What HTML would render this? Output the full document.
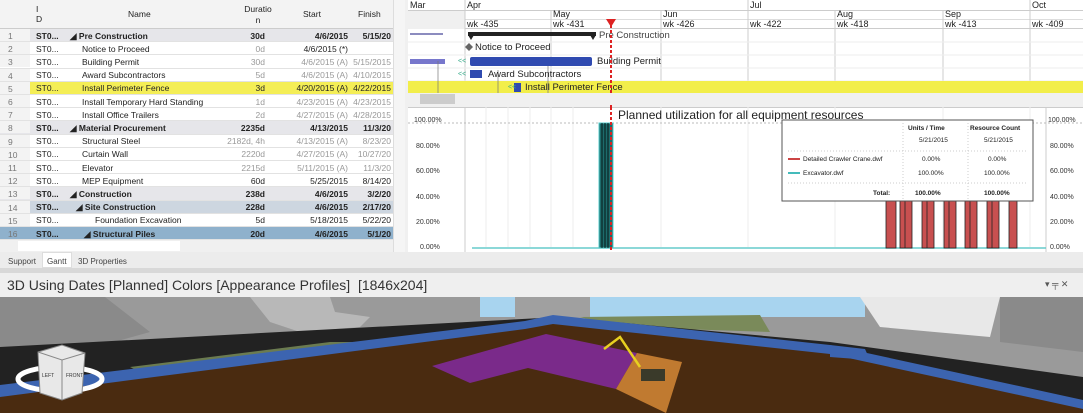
<!DOCTYPE html>
<html><head><meta charset="utf-8"><style>
*{box-sizing:border-box;margin:0;padding:0}
body{width:1083px;height:413px;overflow:hidden;background:#f0f0f0;font-family:"Liberation Sans",sans-serif;position:relative}
.a{position:absolute;white-space:nowrap}
.t{font-size:8.5px;color:#222}
.r{position:absolute;left:0;width:393px;height:13.2px;border-bottom:1px solid #e2e2e2;background:#fff}
.r span{position:absolute;top:1.5px;font-size:8.5px;color:#222;white-space:nowrap}
.g{color:#999!important}
.b{font-weight:bold}
</style></head><body>
<!-- table -->
<div class="a" style="left:0;top:0;width:405px;height:252px;background:#fff;border-right:2px solid #999"></div>
<div class="a" style="left:0;top:0;width:393px;height:29px;background:#f3f3f3;border-bottom:1px solid #ccc"></div>
<div class="a t" style="left:36px;top:4px;line-height:10px">I<br>D</div>
<div class="a t" style="left:128px;top:9px">Name</div>
<div class="a t" style="left:238px;top:4px;line-height:11px;text-align:center;width:40px">Duratio<br>n</div>
<div class="a t" style="left:303px;top:9px">Start</div>
<div class="a t" style="left:358px;top:9px">Finish</div>
<div class="a" style="left:393px;top:0;width:12px;height:252px;background:#f5f5f5;border-left:1px solid #ddd"></div>
<div id="rows"></div>
<div class="a" style="left:0;top:240px;width:393px;height:12px;background:#f0f0f0"></div>
<div class="a" style="left:18px;top:241px;width:162px;height:10px;background:#fff"></div>
<!-- tabs -->
<div class="a" style="left:0;top:252px;width:1083px;height:16px;background:#ececec"></div>
<div class="a" style="left:42px;top:252px;width:30px;height:16px;background:#fff;border:1px solid #ddd"></div>
<div class="a t" style="left:8px;top:257px;color:#444;font-size:8px">Support</div>
<div class="a t" style="left:47px;top:257px;color:#444;font-size:8px">Gantt</div>
<div class="a t" style="left:78px;top:257px;color:#444;font-size:8px">3D Properties</div>
<div class="a" style="left:0;top:268px;width:1083px;height:5px;background:#d8d8d8"></div>
<div class="a" style="left:0;top:273px;width:1083px;height:24px;background:#efefef"></div>
<div class="a" style="left:7px;top:277px;font-size:14px;color:#333">3D Using Dates [Planned] Colors [Appearance Profiles]&nbsp; [1846x204]</div>
<div class="a" style="left:1045px;top:279px;font-size:9px;color:#555">▾ ╤ ✕</div>
<!-- gantt -->
<div class="a" style="left:408px;top:0;width:675px;height:93px;background:#fff"></div>
<div class="a" style="left:408px;top:0;width:675px;height:29px;background:#fff;border-bottom:1px solid #ccc"></div>
<div class="a" style="left:408px;top:10px;width:57px;height:19px;background:#f0f0f0;border-top:1px solid #ccc"></div>
<div class="a" style="left:465px;top:10px;width:618px;border-top:1px solid #ccc"></div>
<div class="a" style="left:465px;top:19px;width:618px;border-top:1px solid #ddd"></div>
<svg class="a" style="left:408px;top:0" width="675" height="110">
<g stroke="#ccc" stroke-width="1">
<line x1="57" y1="0" x2="57" y2="93"/><line x1="143" y1="10" x2="143" y2="93"/><line x1="253" y1="10" x2="253" y2="93"/><line x1="340" y1="0" x2="340" y2="93"/><line x1="427" y1="10" x2="427" y2="93"/><line x1="535" y1="10" x2="535" y2="93"/><line x1="622" y1="0" x2="622" y2="93"/>
</g>
<g stroke="#eee"><line x1="0" y1="42" x2="675" y2="42"/><line x1="0" y1="55" x2="675" y2="55"/><line x1="0" y1="68" x2="675" y2="68"/><line x1="0" y1="81" x2="675" y2="81"/></g>
<rect x="0" y="81" width="675" height="12" fill="#f2ee4a"/>
<g font-size="9" fill="#222" font-family="Liberation Sans">
<text x="2" y="8">Mar</text><text x="59" y="8">Apr</text><text x="342" y="8">Jul</text><text x="624" y="8">Oct</text>
<text x="145" y="17">May</text><text x="255" y="17">Jun</text><text x="429" y="17">Aug</text><text x="537" y="17">Sep</text>
<text x="59" y="27">wk -435</text><text x="145" y="27">wk -431</text><text x="255" y="27">wk -426</text><text x="342" y="27">wk -422</text><text x="429" y="27">wk -418</text><text x="537" y="27">wk -413</text><text x="624" y="27">wk -409</text>
</g>
<line x1="2" y1="34" x2="35" y2="34" stroke="#66a" stroke-width="1.5"/>
<rect x="60" y="32" width="128" height="4" fill="#222"/><polygon points="60,35 66,35 63,40" fill="#222"/><polygon points="182,35 188,35 185,40" fill="#222"/>
<polygon points="61,43 65,47 61,51 57,47" fill="#666"/>
<rect x="2" y="59" width="35" height="5" fill="#77c"/>
<rect x="62" y="57" width="122" height="9" rx="2" fill="#2f4ab0"/>
<rect x="62" y="70" width="12" height="8" fill="#2f4ab0"/>
<rect x="106" y="83" width="7" height="9" fill="#2f4ab0"/>
<g stroke="#777" stroke-width="0.7" fill="none"><polyline points="30,61 30,93"/><polyline points="90,70 90,93"/><polyline points="140,66 140,93"/></g>
<g font-size="9.5" fill="#222" font-family="Liberation Sans">
<text x="191" y="38" fill="#444">Pre Construction</text><text x="67" y="50">Notice to Proceed</text><text x="189" y="64">Building Permit</text><text x="80" y="77">Award Subcontractors</text><text x="117" y="90">Install Perimeter Fence</text>
</g>
<g font-size="7" fill="#3a8"><text x="50" y="63">&lt;&lt;</text><text x="50" y="76">&lt;&lt;</text><text x="100" y="89">&lt;&lt;</text></g>
<line x1="203" y1="20" x2="203" y2="110" stroke="#d22" stroke-width="2" stroke-dasharray="3,2"/>
<polygon points="198,19 208,19 203,27" fill="#d22"/>
<rect x="0" y="93" width="675" height="12" fill="#f0f0f0"/><rect x="12" y="94" width="35" height="10" fill="#ccc"/>
</svg>
<!-- chart -->
<div class="a" style="left:408px;top:107px;width:675px;height:145px;background:#fff;border-top:1px solid #ccc"></div>
<svg class="a" style="left:408px;top:107px" width="675" height="145">
<line x1="57" y1="0" x2="57" y2="145" stroke="#ccc"/><line x1="638" y1="0" x2="638" y2="145" stroke="#ccc"/>
<g stroke="#eee"><line x1="78" y1="0" x2="78" y2="140"/><line x1="100" y1="0" x2="100" y2="140"/><line x1="122" y1="0" x2="122" y2="140"/><line x1="143" y1="0" x2="143" y2="140"/><line x1="165" y1="0" x2="165" y2="140"/><line x1="253" y1="0" x2="253" y2="140"/><line x1="340" y1="0" x2="340" y2="140"/><line x1="427" y1="0" x2="427" y2="140"/><line x1="535" y1="0" x2="535" y2="140"/><line x1="622" y1="0" x2="622" y2="140"/></g>
<line x1="0" y1="16" x2="675" y2="16" stroke="#bbb" stroke-dasharray="2,2"/>
<g font-size="7" fill="#333" font-family="Liberation Sans">
<text x="6" y="15">100.00%</text><text x="8" y="41">80.00%</text><text x="8" y="66">60.00%</text><text x="8" y="92">40.00%</text><text x="8" y="117">20.00%</text><text x="12" y="142">0.00%</text>
<text x="640" y="15">100.00%</text><text x="642" y="41">80.00%</text><text x="642" y="66">60.00%</text><text x="642" y="92">40.00%</text><text x="642" y="117">20.00%</text><text x="642" y="142">0.00%</text>
</g>
<line x1="64" y1="141" x2="638" y2="141" stroke="#6cc" stroke-width="1.5"/>
<rect x="191" y="16" width="14" height="125" fill="#1d6b6b" stroke="#5cc"/>
<g stroke="#000" stroke-width="0.8"><line x1="194" y1="16" x2="194" y2="141"/><line x1="197" y1="16" x2="197" y2="141"/><line x1="200" y1="16" x2="200" y2="141"/></g>
<line x1="203" y1="0" x2="203" y2="145" stroke="#d22" stroke-width="2" stroke-dasharray="3,2"/>
<g fill="#c85050" stroke="#222" stroke-width="0.8">
<rect x="478" y="90" width="10" height="51"/><rect x="492" y="90" width="12" height="51"/><rect x="514" y="90" width="12" height="51"/><rect x="536" y="90" width="12" height="51"/><rect x="557" y="90" width="12" height="51"/><rect x="579" y="90" width="12" height="51"/><rect x="601" y="90" width="8" height="51"/>
</g>
<g stroke="#222" stroke-width="0.8"><line x1="497" y1="90" x2="497" y2="141"/><line x1="519" y1="90" x2="519" y2="141"/><line x1="541" y1="90" x2="541" y2="141"/><line x1="562" y1="90" x2="562" y2="141"/><line x1="584" y1="90" x2="584" y2="141"/></g>
<text x="210" y="12" font-size="12" fill="#222" font-family="Liberation Sans">Planned utilization for all equipment resources</text>
<rect x="374" y="13" width="251" height="81" fill="#fff" stroke="#555"/>
<g stroke="#ccc" stroke-dasharray="1,2"><line x1="380" y1="44" x2="620" y2="44"/><line x1="380" y1="76" x2="620" y2="76"/><line x1="495" y1="16" x2="495" y2="92"/><line x1="560" y1="16" x2="560" y2="92"/></g>
<g font-size="6.5" fill="#222" font-family="Liberation Sans">
<text x="500" y="23" font-weight="bold">Units / Time</text><text x="562" y="23" font-weight="bold">Resource Count</text>
<text x="511" y="35">5/21/2015</text><text x="576" y="35">5/21/2015</text>
<text x="395" y="54">Detailed Crawler Crane.dwf</text><text x="514" y="54">0.00%</text><text x="580" y="54">0.00%</text>
<text x="395" y="68">Excavator.dwf</text><text x="510" y="68">100.00%</text><text x="576" y="68">100.00%</text>
<text x="465" y="88" font-weight="bold">Total:</text><text x="507" y="88" font-weight="bold">100.00%</text><text x="576" y="88" font-weight="bold">100.00%</text>
</g>
<line x1="380" y1="52" x2="392" y2="52" stroke="#c44" stroke-width="2"/><line x1="380" y1="66" x2="392" y2="66" stroke="#4bb" stroke-width="2"/>
</svg>
<!-- 3D -->
<svg class="a" style="left:0;top:297px" width="1083" height="116">
<rect width="1083" height="116" fill="#9a9a9a"/>
<rect x="480" y="0" width="385" height="20" fill="#a8d4ef"/>
<polygon points="0,0 105,0 150,35 60,60 0,65" fill="#8a8a8a"/>
<polygon points="250,0 330,0 335,15 370,20 360,30 300,35 270,25" fill="#b8b8b8"/>
<polygon points="515,0 590,0 590,22 515,25" fill="#a0a0a0"/>
<polygon points="860,0 1000,0 990,40 880,30" fill="#e8e8e8"/>
<polygon points="1000,0 1083,0 1083,55 1000,45" fill="#8a8a8a"/>
<polygon points="580,20 760,18 770,35 620,30" fill="#7a8a5a"/>
<polygon points="0,50 560,20 830,45 1083,80 1083,116 0,116" fill="#222"/>
<polygon points="130,70 330,45 360,45 150,80" fill="#6b7b50"/>
<polygon points="0,88 525,24 553,18 830,48 1083,103 1083,116 0,116" fill="#3c64b0"/>
<polygon points="0,100 525,32 553,27 830,57 1083,112 1083,116 0,116" fill="#4a2b10"/>
<polygon points="830,48 865,52 870,63 830,60" fill="#3c64b0"/>
<polygon points="432,69 546,37 637,56 616,92 528,71 470,86" fill="#7a2a8a"/>
<polygon points="616,92 637,56 682,65 666,116" fill="#c07a30"/>
<rect x="641" y="72" width="24" height="12" fill="#3a3a2a"/>
<polyline points="604,52 620,40 640,70" fill="none" stroke="#e8d020" stroke-width="2.5"/>
<ellipse cx="60" cy="82" rx="42" ry="12" fill="none" stroke="#fff" stroke-width="5"/>
<polygon points="38,55 62,48 85,56 82,96 62,103 40,96" fill="#e8e8e8" stroke="#888"/>
<line x1="62" y1="63" x2="62" y2="103" stroke="#888"/><polyline points="38,55 62,63 85,56" fill="none" stroke="#888"/>
<text x="42" y="80" font-size="5" fill="#333">LEFT</text><text x="66" y="80" font-size="5" fill="#333">FRONT</text>
</svg>
<script>
var d=[["1","ST0...","◢ Pre Construction","30d","4/6/2015","5/15/20","s",0],
["2","ST0...","Notice to Proceed","0d","4/6/2015 (*)","","",2],
["3","ST0...","Building Permit","30d","4/6/2015 (A)","5/15/2015","a",2],
["4","ST0...","Award Subcontractors","5d","4/6/2015 (A)","4/10/2015","a",2],
["5","ST0...","Install Perimeter Fence","3d","4/20/2015 (A)","4/22/2015","y",2],
["6","ST0...","Install Temporary Hard Standing","1d","4/23/2015 (A)","4/23/2015","a",2],
["7","ST0...","Install Office Trailers","2d","4/27/2015 (A)","4/28/2015","a",2],
["8","ST0...","◢ Material Procurement","2235d","4/13/2015","11/3/20","s",0],
["9","ST0...","Structural Steel","2182d, 4h","4/13/2015 (A)","8/23/20","a",2],
["10","ST0...","Curtain Wall","2220d","4/27/2015 (A)","10/27/20","a",2],
["11","ST0...","Elevator","2215d","5/11/2015 (A)","11/3/20","a",2],
["12","ST0...","MEP Equipment","60d","5/25/2015","8/14/20","",2],
["13","ST0...","◢ Construction","238d","4/6/2015","3/2/20","s",0],
["14","ST0...","◢ Site Construction","228d","4/6/2015","2/17/20","t",1],
["15","ST0...","Foundation Excavation","5d","5/18/2015","5/22/20","",3],
["16","ST0...","◢ Structural Piles","20d","4/6/2015","5/1/20","u",2]];
var ind=[70,76,82,95];
var h="";d.forEach(function(r,i){var bg="#fff",cls="";if(r[6]=="s"){bg="#e6e6ea";cls="b"}if(r[6]=="t"){bg="#cdd6e0";cls="b"}if(r[6]=="u"){bg="#8fb1cc";cls="b"}if(r[6]=="y")bg="#f4ee56";
var g=r[6]=="a"?" g":"";
var L=ind[r[7]];if(r[6]=="u")L=84;
h+='<div class="r" style="top:'+(29+i*13.2)+'px;background:'+bg+'"><span style="left:0;width:30px;height:12px;top:0;background:'+(r[6]=="u"?"#8fb1cc":"#f3f3f3")+';padding:2px 0 0 8px;color:#777">'+r[0]+'</span><span class="'+cls+'" style="left:36px">'+r[1]+'</span><span class="'+cls+'" style="left:'+L+'px">'+r[2]+'</span><span class="'+cls+(r[6]=="a"||i==1?" g":"")+'" style="right:128px">'+r[3]+'</span><span class="'+cls+g+'" style="right:45px">'+r[4]+'</span><span class="'+cls+g+'" style="right:2px">'+r[5]+'</span></div>';});
document.getElementById("rows").innerHTML=h;
</script>
</body></html>
